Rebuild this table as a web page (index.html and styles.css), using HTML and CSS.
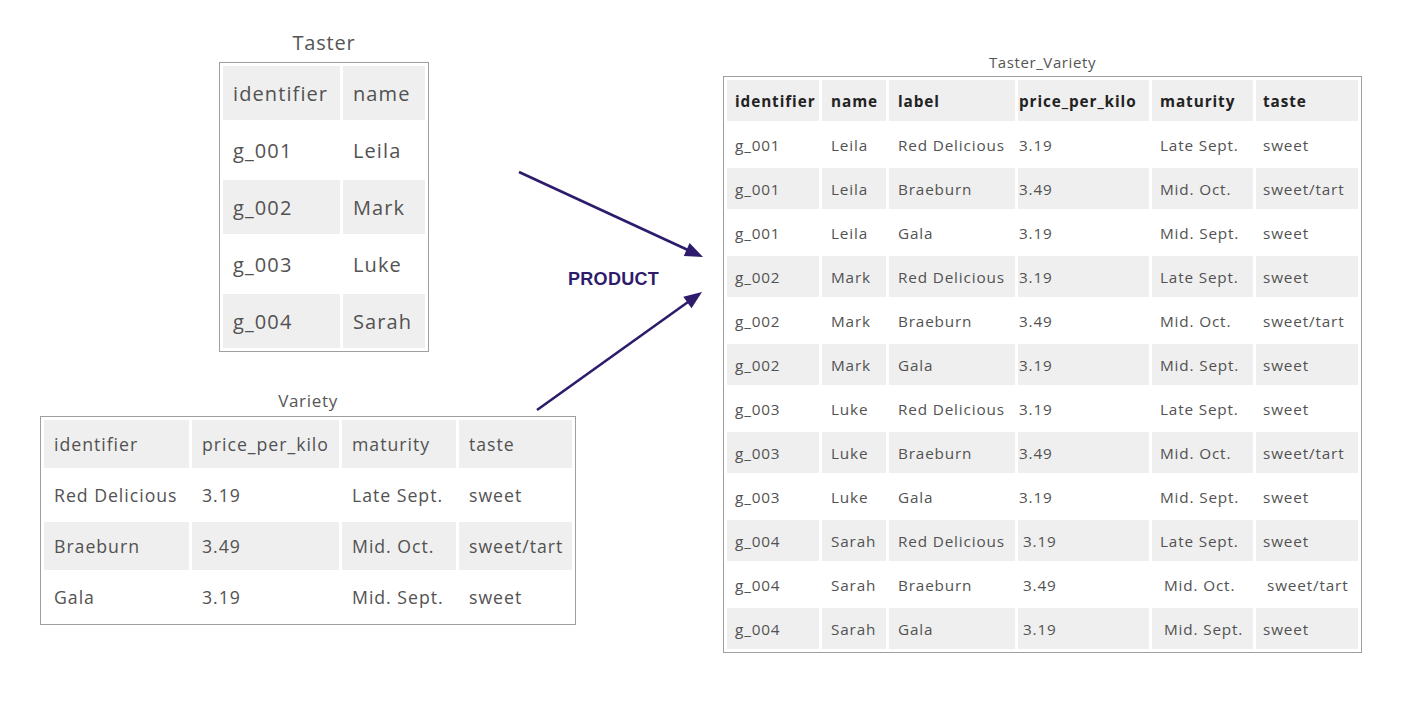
FILE: index.html
```html
<!DOCTYPE html>
<html lang="en">
<head>
<meta charset="utf-8">
<title>Cartesian product</title>
<link rel="stylesheet" href="styles.css">
</head>
<body>
<div class="canvas">
  <div class="left">
    <section class="block taster-block">
      <div class="title t-taster">Taster</div>
      <table class="tbl taster">
        <tr class="alt"><td class="c1">identifier</td><td class="c2">name</td></tr>
        <tr><td>g_001</td><td>Leila</td></tr>
        <tr class="alt"><td>g_002</td><td>Mark</td></tr>
        <tr><td>g_003</td><td>Luke</td></tr>
        <tr class="alt"><td>g_004</td><td>Sarah</td></tr>
      </table>
    </section>
    <section class="block variety-block">
      <div class="title t-variety">Variety</div>
      <table class="tbl variety">
        <tr class="alt"><td class="c1">identifier</td><td class="c2">price_per_kilo</td><td class="c3">maturity</td><td class="c4">taste</td></tr>
        <tr><td>Red Delicious</td><td>3.19</td><td>Late Sept.</td><td>sweet</td></tr>
        <tr class="alt"><td>Braeburn</td><td>3.49</td><td>Mid. Oct.</td><td>sweet/tart</td></tr>
        <tr><td>Gala</td><td>3.19</td><td>Mid. Sept.</td><td>sweet</td></tr>
      </table>
    </section>
  </div>
  <div class="mid">
    <div class="product">PRODUCT</div>
  </div>
  <section class="block result-block">
    <div class="title t-result">Taster_Variety</div>
    <table class="tbl result">
      <tr class="alt head"><th class="c1">identifier</th><th class="c2">name</th><th class="c3">label</th><th class="c4">price_per_kilo</th><th class="c5">maturity</th><th class="c6">taste</th></tr>
      <tr><td>g_001</td><td>Leila</td><td>Red Delicious</td><td>3.19</td><td>Late Sept.</td><td>sweet</td></tr>
      <tr class="alt"><td>g_001</td><td>Leila</td><td>Braeburn</td><td>3.49</td><td>Mid. Oct.</td><td>sweet/tart</td></tr>
      <tr><td>g_001</td><td>Leila</td><td>Gala</td><td>3.19</td><td>Mid. Sept.</td><td>sweet</td></tr>
      <tr class="alt"><td>g_002</td><td>Mark</td><td>Red Delicious</td><td>3.19</td><td>Late Sept.</td><td>sweet</td></tr>
      <tr><td>g_002</td><td>Mark</td><td>Braeburn</td><td>3.49</td><td>Mid. Oct.</td><td>sweet/tart</td></tr>
      <tr class="alt"><td>g_002</td><td>Mark</td><td>Gala</td><td>3.19</td><td>Mid. Sept.</td><td>sweet</td></tr>
      <tr><td>g_003</td><td>Luke</td><td>Red Delicious</td><td>3.19</td><td>Late Sept.</td><td>sweet</td></tr>
      <tr class="alt"><td>g_003</td><td>Luke</td><td>Braeburn</td><td>3.49</td><td>Mid. Oct.</td><td>sweet/tart</td></tr>
      <tr><td>g_003</td><td>Luke</td><td>Gala</td><td>3.19</td><td>Mid. Sept.</td><td>sweet</td></tr>
      <tr class="alt"><td>g_004</td><td>Sarah</td><td>Red Delicious</td><td class="sh">3.19</td><td>Late Sept.</td><td>sweet</td></tr>
      <tr><td>g_004</td><td>Sarah</td><td>Braeburn</td><td class="sh">3.49</td><td class="sh">Mid. Oct.</td><td class="sh">sweet/tart</td></tr>
      <tr class="alt"><td>g_004</td><td>Sarah</td><td>Gala</td><td class="sh">3.19</td><td class="sh">Mid. Sept.</td><td>sweet</td></tr>
    </table>
  </section>
  <svg class="arrows" width="1407" height="704" viewBox="0 0 1407 704" aria-hidden="true">
    <line x1="519" y1="172" x2="689" y2="250.5" />
    <polygon points="703,257 683.8,255.9 689.6,243.1" />
    <line x1="537" y1="410" x2="688" y2="302" />
    <polygon points="702,292 691.5,308.2 683.3,296.8" />
  </svg>
</div>
</body>
</html>
```
FILE: styles.css
```css
html, body {
  margin: 0;
  padding: 0;
  background: #ffffff;
}

body {
  font-family: "Open Sans", "DejaVu Sans", sans-serif;
  color: #525252;
}

.canvas {
  position: relative;
  width: 1407px;
  height: 704px;
  display: flex;
  align-items: flex-start;
  overflow: hidden;
}

.left {
  flex: none;
  width: 536px;
  padding-left: 40px;
  display: flex;
  flex-direction: column;
  align-items: flex-start;
}

.block {
  display: flex;
  flex-direction: column;
  align-items: center;
}

.title {
  letter-spacing: 0.04em;
  color: #555555;
}

/* Taster */
.taster-block {
  margin-left: 179px;
  margin-top: 31px;
}

.t-taster {
  font-size: 20px;
  line-height: 24px;
  margin-bottom: 7px;
}

/* Variety */
.variety-block {
  margin-top: 38px;
}

.t-variety {
  font-size: 17px;
  line-height: 22px;
  margin-bottom: 4px;
}

/* Middle label */
.mid {
  flex: none;
  width: 147px;
}

.product {
  margin-left: -8px;
  margin-top: 269px;
  font-family: "Liberation Sans", Arial, sans-serif;
  font-weight: bold;
  font-size: 18px;
  line-height: 20px;
  letter-spacing: 0.3px;
  color: #2e1b6b;
}

/* Result */
.result-block {
  margin-top: 53px;
}

.t-result {
  font-size: 15px;
  line-height: 18px;
  margin-bottom: 5px;
}

/* Tables */
.tbl {
  border-collapse: separate;
  border-spacing: 3px;
  border: 1px solid #9f9f9f;
  table-layout: fixed;
  letter-spacing: 0.055em;
}

.tbl td,
.tbl th {
  padding: 0 0 0 10px;
  text-align: left;
  font-weight: normal;
  white-space: nowrap;
  vertical-align: middle;
  overflow: hidden;
}

.tbl .alt > td,
.tbl .alt > th {
  background: #efefef;
}

.taster {
  font-size: 20px;
}
.taster td { height: 54px; }
.taster .c1 { width: 107px; }
.taster .c2 { width: 72px; }

.variety {
  font-size: 17.7px;
}
.variety td { height: 48px; }
.variety .c1 { width: 135px; }
.variety .c2 { width: 137px; }
.variety .c3 { width: 104px; }
.variety .c4 { width: 103px; }

.result {
  font-size: 15.3px;
}
.result td,
.result th { height: 41px; }
.result th {
  font-weight: bold;
  color: #222222;
  letter-spacing: 0.06em;
}
.result tr > :nth-child(1) { padding-left: 8px; }
.result tr > :nth-child(2) { padding-left: 9px; }
.result tr > :nth-child(3) { padding-left: 9px; }
.result tr > :nth-child(4) { padding-left: 1px; }
.result tr > :nth-child(5) { padding-left: 8px; }
.result tr > :nth-child(6) { padding-left: 7px; }
.result tr > .sh:nth-child(4) { padding-left: 5px; }
.result tr > .sh:nth-child(5) { padding-left: 12px; }
.result tr > .sh:nth-child(6) { padding-left: 11px; }

.result .c1 { width: 84px; }
.result .c2 { width: 55px; }
.result .c3 { width: 117px; }
.result .c4 { width: 130px; }
.result .c5 { width: 93px; }
.result .c6 { width: 95px; }

/* Connector arrows */
.arrows {
  position: absolute;
  left: 0;
  top: 0;
  pointer-events: none;
}

.arrows line {
  stroke: #2e1b6b;
  stroke-width: 2.6;
}

.arrows polygon {
  fill: #2e1b6b;
}
```
